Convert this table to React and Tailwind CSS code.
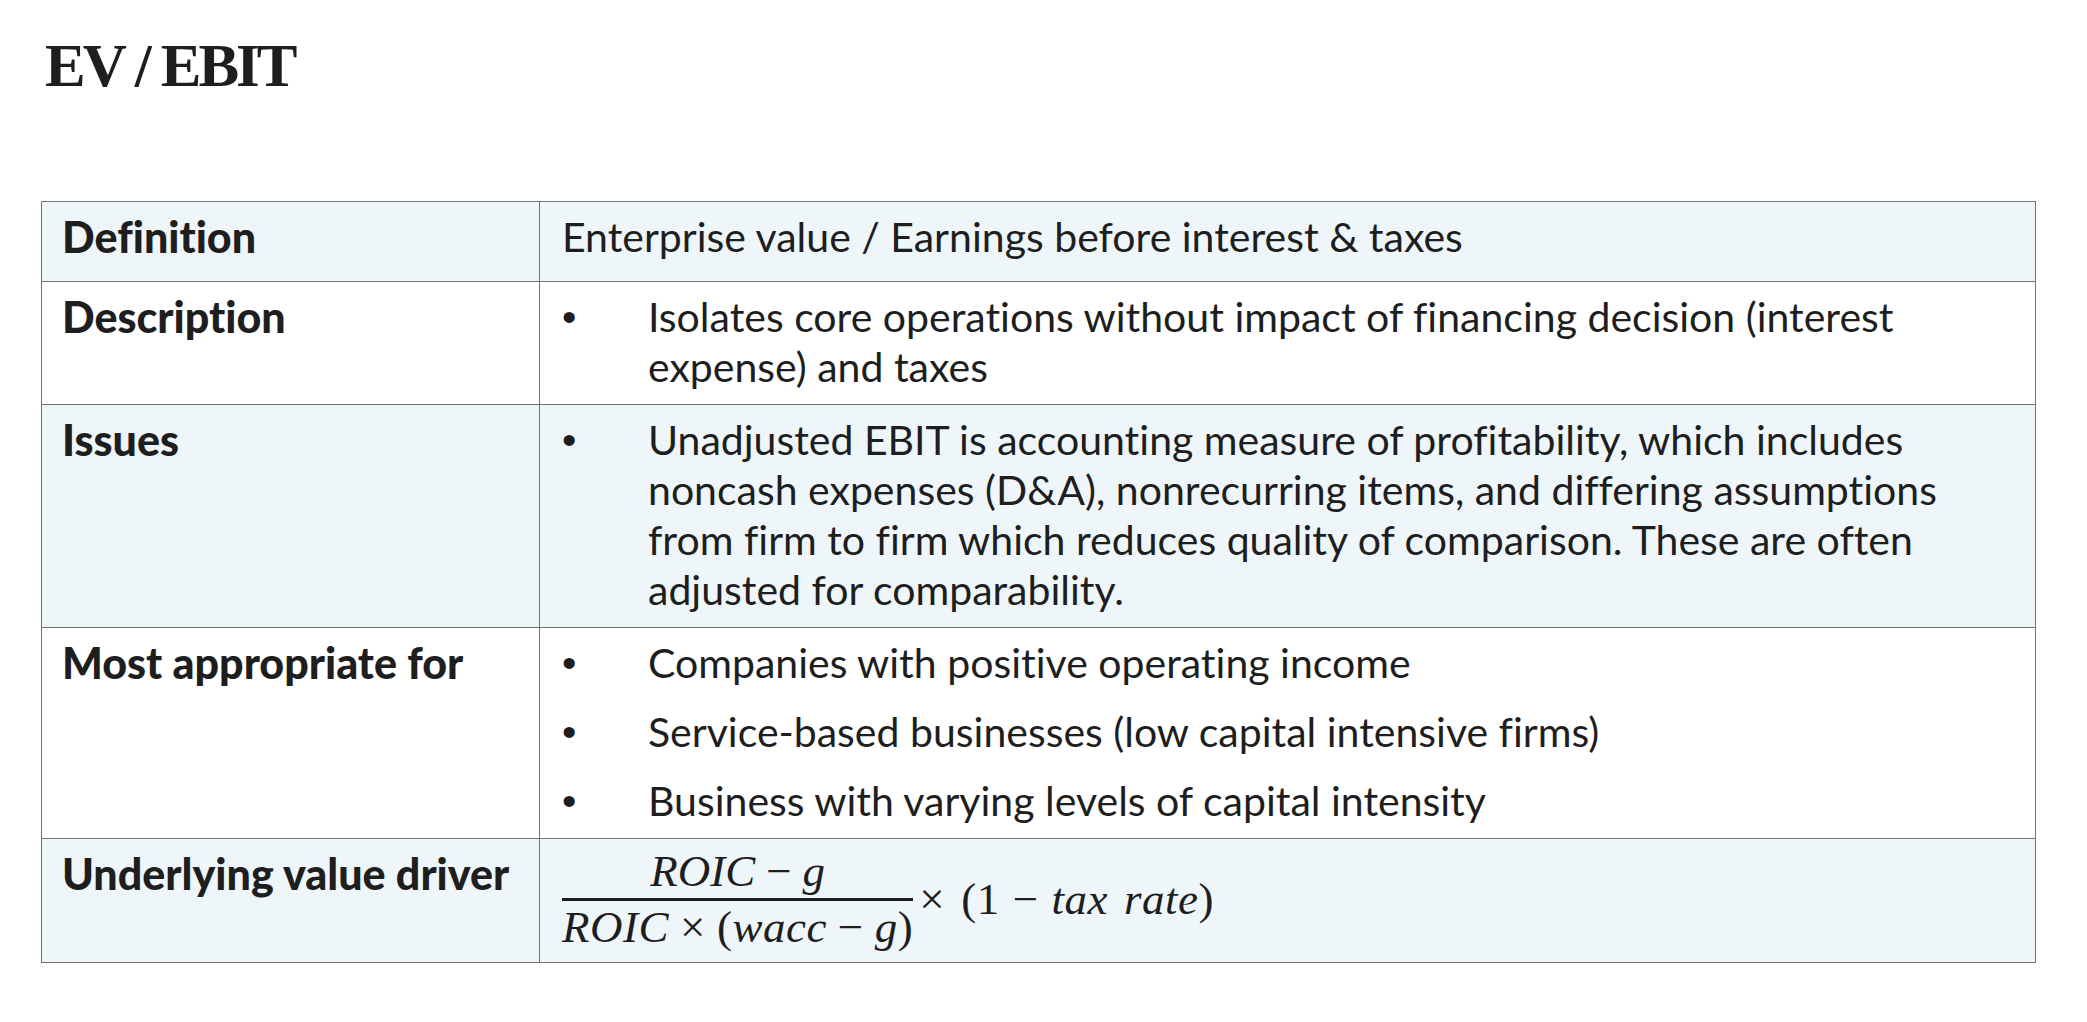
const rows = [
  {
    label: "Definition",
    tint: true,
    text: "Enterprise value / Earnings before interest & taxes",
  },
  {
    label: "Description",
    bullets: [
      "Isolates core operations without impact of financing decision (interest expense) and taxes",
    ],
  },
  {
    label: "Issues",
    tint: true,
    bullets: [
      "Unadjusted EBIT is accounting measure of profitability, which includes noncash expenses (D&A), nonrecurring items, and differing assumptions from firm to firm which reduces quality of comparison. These are often adjusted for comparability.",
    ],
  },
  {
    label: "Most appropriate for",
    bullets: [
      "Companies with positive operating income",
      "Service-based businesses (low capital intensive firms)",
      "Business with varying levels of capital intensity",
    ],
  },
];

const Bullets = ({ items }) => (
  <div className="flex flex-col gap-[19px]">
    {items.map((b) => (
      <div key={b} className="flex">
        <span className="w-[86px] shrink-0 font-['Liberation_Sans',sans-serif]">•</span>
        <span>{b}</span>
      </div>
    ))}
  </div>
);

// math operator with medium spacing, upright
const Op = ({ children }) => <span className="mx-[11px] not-italic">{children}</span>;

const Formula = () => (
  <div className="flex items-center font-['Liberation_Serif',serif] italic text-[45px] leading-none text-[#1e1e1e]">
    <div className="flex flex-col items-center">
      <span className="pb-[4px]">
        ROIC<Op>−</Op>g
      </span>
      <span className="w-full border-t-[3px] border-[#1e1e1e]" />
      <span className="pt-[4px] tracking-[0.5px]">
        ROIC<Op>×</Op><span className="not-italic">(</span>wacc<Op>−</Op>g<span className="not-italic">)</span>
      </span>
    </div>
    <span className="ml-[6px] tracking-[0.5px]">
      <span className="not-italic">×</span>
      <span className="ml-[16px] not-italic">(1</span>
      <span className="mx-[13px] not-italic">−</span>tax<span className="ml-[16px]">rate</span>
      <span className="not-italic">)</span>
    </span>
  </div>
);

export default function App() {
  return (
    <div className="min-h-screen bg-white pl-[41px] pt-[35px] text-[#1e1e1e]">
      <h1 className="ml-[4px] font-['Liberation_Serif',serif] text-[61px] font-bold leading-none tracking-[-0.05em]">
        EV / EBIT
      </h1>

      <div className="mt-[105px] w-[1995px] border border-[#737373] font-['Lato',sans-serif] text-[41px] leading-[50px] [font-variant-ligatures:none]">
        {rows.map((r) => (
          <div
            key={r.label}
            className={`grid grid-cols-[498px_1fr] border-b border-[#737373] ${r.tint ? "bg-[#eef6fa]" : "bg-white"}`}
          >
            <div className="border-r border-[#737373] pl-[20px] pt-[10px] pb-[12px] text-[43px] font-black">{r.label}</div>
            <div className={`pl-[22px] pr-[40px] pt-[10px] ${r.text ? "pb-[19px]" : "pb-[12px]"}`}>
              {r.text ? r.text : <Bullets items={r.bullets} />}
            </div>
          </div>
        ))}
        <div className="grid h-[123px] grid-cols-[498px_1fr] bg-[#eef6fa]">
          <div className="border-r border-[#737373] pl-[20px] pt-[10px] text-[43px] font-black">Underlying value driver</div>
          <div className="pl-[22px] pt-[10px]">
            <Formula />
          </div>
        </div>
      </div>
    </div>
  );
}
